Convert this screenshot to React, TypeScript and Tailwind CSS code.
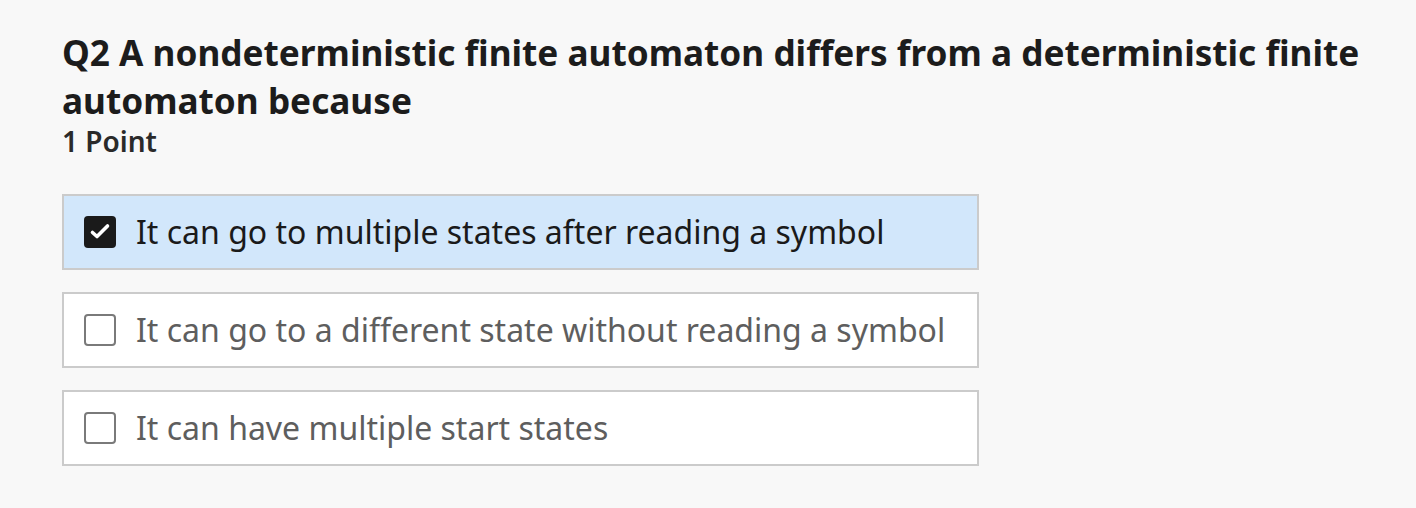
import React from "react";

const options = [
  { text: "It can go to multiple states after reading a symbol", checked: true },
  { text: "It can go to a different state without reading a symbol", checked: false },
  { text: "It can have multiple start states", checked: false },
];

export default function App() {
  return (
    <div
      className="min-h-[508px] w-full bg-[#f8f8f8] pl-[62px] pt-[28px]"
      style={{ fontFamily: '"Noto Sans", "Open Sans", sans-serif' }}
    >
      <h2 className="w-[1320px] text-[35.2px] font-bold leading-[48px] text-[#1c1c1c]">
        Q2 A nondeterministic finite automaton differs from a deterministic finite automaton because
      </h2>
      <div className="text-[28px] font-semibold leading-[34px] text-[#2a2a2a]">1 Point</div>
      <div className="mt-[36px] flex w-[917px] flex-col gap-[22px]">
        {options.map((o) => (
          <label
            key={o.text}
            className={`flex h-[76px] items-center border-2 border-[#cbcbcb] pl-[20px] ${
              o.checked ? "bg-[#d2e7fb]" : "bg-white"
            }`}
          >
            {o.checked ? (
              <span className="h-[32px] w-[32px] rounded-[4px] bg-[#1a1a1a]">
                <svg width="32" height="32" viewBox="0 0 32 32" fill="none">
                  <path d="M8.5 16.5 L13 20.5 L23.5 10" stroke="white" strokeWidth="3.6" strokeLinecap="round" strokeLinejoin="round" />
                </svg>
              </span>
            ) : (
              <span className="h-[32px] w-[32px] rounded-[4px] border-2 border-[#7a7a7a] bg-white" />
            )}
            <span
              className={`ml-[20px] text-[32px] leading-none ${
                o.checked ? "text-[#1a1a1a]" : "text-[#5e5e5e]"
              }`}
            >
              {o.text}
            </span>
          </label>
        ))}
      </div>
    </div>
  );
}
